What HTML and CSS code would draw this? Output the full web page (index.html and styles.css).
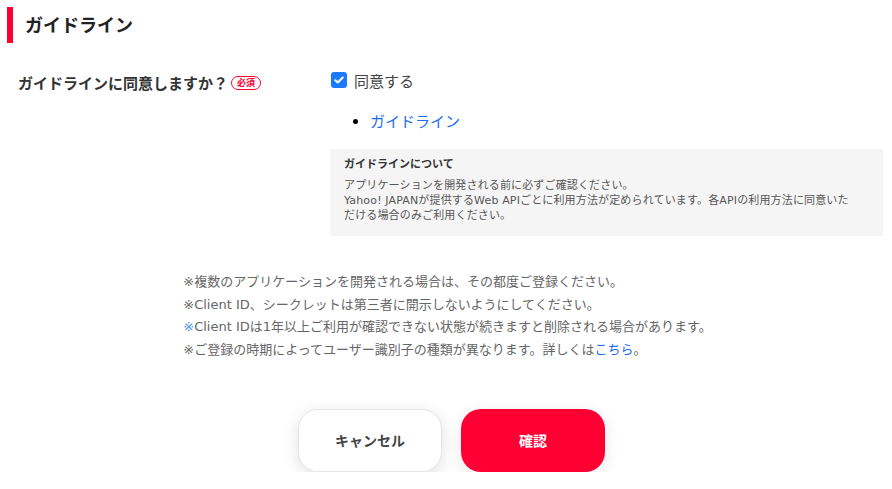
FILE: index.html
```html
<!DOCTYPE html>
<html lang="ja">
<head>
<meta charset="utf-8">
<link rel="stylesheet" href="styles.css">
</head>
<body>
<div class="page">
  <h2 class="section-title">ガイドライン</h2>
  <div class="form-row">
    <div class="label">ガイドラインに同意しますか？<span class="badge">必須</span></div>
    <div class="field">
      <label class="check">
        <span class="box"><svg width="10" height="8" viewBox="0 0 10 8"><path d="M1.3 4.2 L3.8 6.5 L8.7 1.5" fill="none" stroke="#fff" stroke-width="2" stroke-linecap="round" stroke-linejoin="round"/></svg></span>
        <span class="check-text">同意する</span>
      </label>
      <ul class="links">
        <li><a href="#">ガイドライン</a></li>
      </ul>
      <div class="info">
        <p class="info-title">ガイドラインについて</p>
        <p class="info-body">アプリケーションを開発される前に必ずご確認ください。<br>Yahoo! JAPANが提供するWeb APIごとに利用方法が定められています。各APIの利用方法に同意いただける場合のみご利用ください。</p>
      </div>
    </div>
  </div>
  <div class="notes-wrap">
    <ul class="notes">
      <li>※複数のアプリケーションを開発される場合は、その都度ご登録ください。</li>
      <li>※Client ID、シークレットは第三者に開示しないようにしてください。</li>
      <li><span class="mark">※</span>Client IDは1年以上ご利用が確認できない状態が続きますと削除される場合があります。</li>
      <li>※ご登録の時期によってユーザー識別子の種類が異なります。詳しくは<a href="#">こちら</a>。</li>
    </ul>
  </div>
  <div class="actions">
    <button class="btn btn-cancel">キャンセル</button>
    <button class="btn btn-primary">確認</button>
  </div>
</div>
</body>
</html>
```

FILE: styles.css
```css
* { box-sizing: border-box; }
html, body { margin: 0; padding: 0; background: #fff; }
body {
  font-family: "DejaVu Sans", "Noto Sans CJK JP", sans-serif;
  color: #333;
}
.page {
  padding: 7px 9px 0 7px;
}
.section-title {
  margin: 0;
  border-left: 6px solid #ff0033;
  padding-left: 12px;
  height: 36px;
  line-height: 34px;
  font-size: 18px;
  font-weight: 700;
  color: #222;
  font-family: "Noto Sans CJK JP", sans-serif;
}
.form-row {
  display: flex;
  align-items: flex-start;
  margin-top: 29px;
}
.label {
  width: 323px;
  padding-left: 11px;
  font-size: 15px;
  font-weight: 700;
  line-height: 22px;
  display: flex;
  align-items: center;
  color: #333;
  font-family: "Noto Sans CJK JP", sans-serif;
}
.badge {
  display: inline-block;
  margin-left: 3px;
  border: 1px solid #ff0033;
  border-radius: 8px;
  color: #ff0033;
  font-size: 9px;
  line-height: 12px;
  padding: 0 5px;
  font-weight: 700;
}
.field {
  flex: 1;
}
.check {
  display: flex;
  align-items: center;
  height: 18px;
  margin-left: 1px;
  margin-top: -1px;
}
.box {
  width: 16px;
  height: 16px;
  border-radius: 3px;
  background: #1b7bff;
  display: flex;
  align-items: center;
  justify-content: center;
}
.check-text {
  margin-left: 7px;
  font-size: 15px;
  color: #444;
  font-family: "Noto Sans CJK JP", sans-serif;
}
.links {
  margin: 21px 0 0 0;
  padding: 0 0 0 40px;
  font-size: 15px;
  line-height: 22px;
  font-family: "Noto Sans CJK JP", sans-serif;
}
.links li::marker { color: #000; font-size: 13px; }
.links a { color: #1d6cf0; text-decoration: none; }
.info {
  margin-top: 17px;
  background: #f5f5f5;
  padding: 8px 31px 13px 14px;
}
.info p { margin: 0; }
.info-title {
  font-size: 11px;
  font-weight: 700;
  line-height: 16px;
  color: #333;
}
.info-body {
  margin-top: 5px !important;
  font-size: 11px;
  line-height: 15px;
  color: #555;
  letter-spacing: 0.15px;
}
.notes-wrap {
  display: flex;
  justify-content: center;
  margin-top: 35px;
}
.notes {
  list-style: none;
  margin: 0;
  padding: 0 0 0 5px;
  font-size: 13px;
  line-height: 22.7px;
  color: #666;
}
.notes a { color: #1d6cf0; text-decoration: none; }
.mark { color: #4d94e8; }
.actions {
  display: flex;
  justify-content: center;
  gap: 19px;
  margin-top: 47px;
  padding-left: 13px;
}
.btn {
  width: 144px;
  height: 63px;
  border-radius: 20px;
  font-family: "Noto Sans CJK JP", sans-serif;
  font-size: 14px;
  font-weight: 700;
  cursor: pointer;
}
.btn-cancel {
  background: #fff;
  color: #444;
  border: 1px solid #e6e6e6;
  box-shadow: 0 4px 16px rgba(0,0,0,0.12);
}
.btn-primary {
  background: #ff0033;
  color: #fff;
  border: none;
  box-shadow: 0 4px 16px rgba(0,0,0,0.10);
}
```
